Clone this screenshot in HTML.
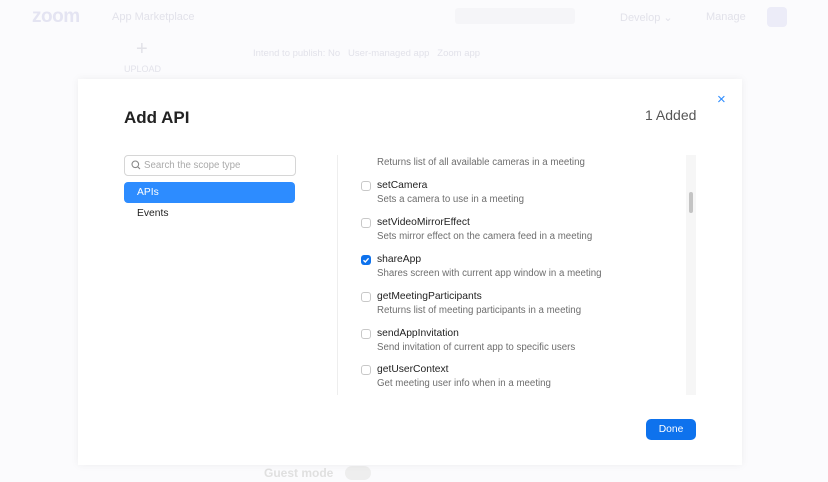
<!DOCTYPE html><html><head><style>
body{margin:0;width:828px;height:482px;background:#fbfbfd;font-family:"Liberation Sans",sans-serif;position:relative;overflow:hidden}
.a{position:absolute;white-space:nowrap}
.bg{color:#e2e2ea;font-size:11px}
.m{position:absolute;left:78px;top:79px;width:664px;height:386px;background:#fff;box-shadow:0 0 8px rgba(0,0,0,.06)}
.n{font-size:10.3px;color:#222}
.d{font-size:9.7px;color:#6e6e6e}
.cb{position:absolute;width:8px;height:8px;border:1px solid #c8c8c8;border-radius:3px;background:#fff}
</style></head><body>
<div class="a" style="left:32px;top:6px;font-size:19px;font-weight:bold;color:#e4e4f2;letter-spacing:-0.5px">zoom</div>
<div class="a bg" style="left:112px;top:11px">App Marketplace</div>
<div class="a" style="left:455px;top:8px;width:120px;height:16px;background:#f5f5f8;border-radius:3px"></div>
<div class="a bg" style="left:620px;top:11px">Develop ⌄</div>
<div class="a bg" style="left:706px;top:11px">Manage</div>
<div class="a" style="left:767px;top:7px;width:20px;height:20px;background:#ececf8;border-radius:4px"></div>
<div class="a" style="left:136px;top:38px;font-size:20px;color:#e2e2e8">+</div>
<div class="a bg" style="left:124px;top:64px;font-size:9px">UPLOAD</div>
<div class="a bg" style="left:253px;top:48px;font-size:9.5px">Intend to publish: No &nbsp; User-managed app &nbsp; Zoom app</div>
<div class="a" style="left:264px;top:466px;font-size:12px;font-weight:bold;color:#e0e0e0">Guest mode</div>
<div class="a" style="left:345px;top:466px;width:26px;height:14px;background:#eee;border-radius:7px"></div>

<div class="m">
<div class="a" style="left:46px;top:29px;font-size:17px;font-weight:bold;color:#222">Add API</div>
<div class="a" style="left:567px;top:28px;font-size:14px;color:#555">1 Added</div>
<div class="a" style="left:639px;top:12px;font-size:15px;color:#2d8cff">×</div>
<div class="a" style="left:46px;top:76px;width:170px;height:19px;border:1px solid #d6d6d6;border-radius:4px"></div>
<svg class="a" style="left:53px;top:81px" width="10" height="10"><circle cx="4.3" cy="4.3" r="3.3" fill="none" stroke="#888" stroke-width="1.1"/><line x1="6.8" y1="6.8" x2="9" y2="9" stroke="#888" stroke-width="1.1"/></svg>
<div class="a" style="left:66px;top:81px;font-size:9.7px;color:#aaa">Search the scope type</div>
<div class="a" style="left:46px;top:103px;width:171px;height:21px;background:#2d8cff;border-radius:4px"></div>
<div class="a" style="left:59px;top:108px;font-size:10.3px;color:#fff">APIs</div>
<div class="a" style="left:59px;top:129px;font-size:10.3px;color:#222">Events</div>
<div class="a" style="left:259px;top:76px;width:1px;height:240px;background:#eee"></div>
<div class="a" style="left:608px;top:76px;width:10px;height:240px;background:#f6f6f6"></div>
<div class="a" style="left:611px;top:113px;width:4px;height:21px;background:#c4c4c4;border-radius:2px"></div>
<div class="a d" style="left:299px;top:78px">Returns list of all available cameras in a meeting</div>

<div class="cb" style="left:283px;top:102px"></div><div class="a n" style="left:299px;top:101px">setCamera</div><div class="a d" style="left:299px;top:115px">Sets a camera to use in a meeting</div>
<div class="cb" style="left:283px;top:139px"></div><div class="a n" style="left:299px;top:138px">setVideoMirrorEffect</div><div class="a d" style="left:299px;top:152px">Sets mirror effect on the camera feed in a meeting</div>
<div class="a" style="left:283px;top:176px;width:10px;height:10px;background:#0e72ed;border-radius:3px"></div>
<svg class="a" style="left:283px;top:176px" width="10" height="10"><path d="M2.5 5.2 L4.3 7 L7.6 3.3" fill="none" stroke="#fff" stroke-width="1.4"/></svg>
<div class="a n" style="left:299px;top:175px">shareApp</div><div class="a d" style="left:299px;top:189px">Shares screen with current app window in a meeting</div>
<div class="cb" style="left:283px;top:213px"></div><div class="a n" style="left:299px;top:212px">getMeetingParticipants</div><div class="a d" style="left:299px;top:226px">Returns list of meeting participants in a meeting</div>
<div class="cb" style="left:283px;top:250px"></div><div class="a n" style="left:299px;top:249px">sendAppInvitation</div><div class="a d" style="left:299px;top:263px">Send invitation of current app to specific users</div>
<div class="cb" style="left:283px;top:286px"></div><div class="a n" style="left:299px;top:285px">getUserContext</div><div class="a d" style="left:299px;top:299px">Get meeting user info when in a meeting</div>

<div class="a" style="left:568px;top:340px;width:50px;height:21px;background:#0e72ed;border-radius:5px;color:#fff;font-size:10.3px;text-align:center;line-height:22px">Done</div>
</div>
</body></html>
